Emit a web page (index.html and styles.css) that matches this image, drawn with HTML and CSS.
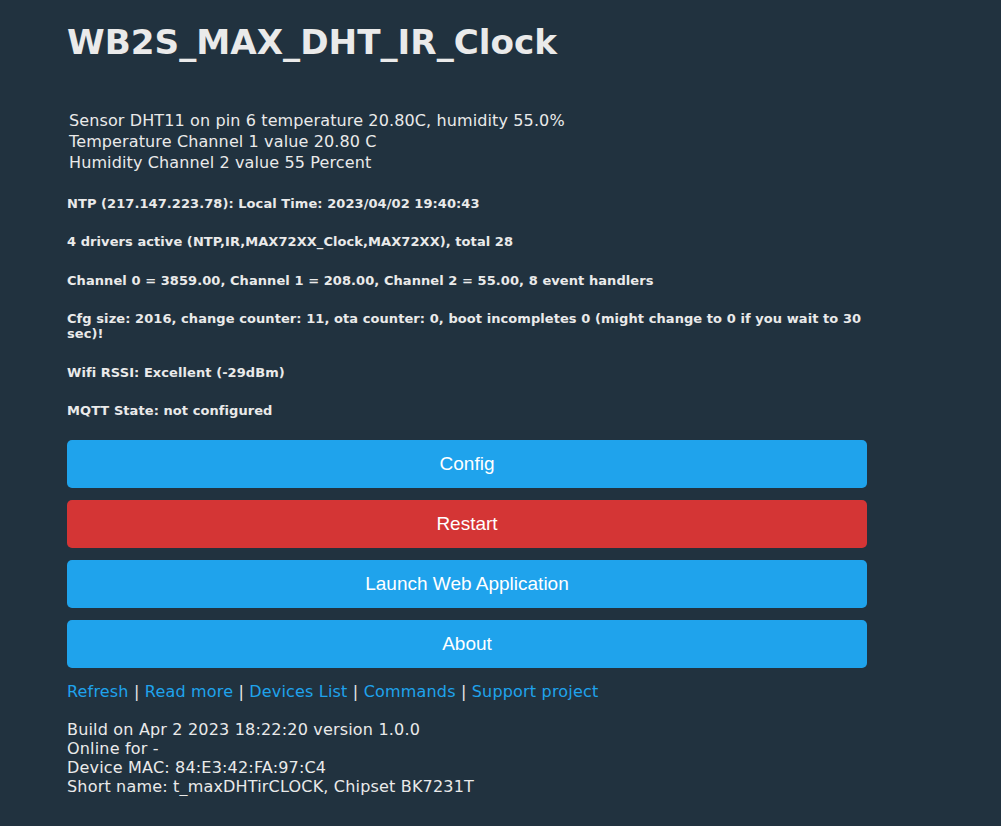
FILE: index.html
```html
<!DOCTYPE html>
<html>
<head>
<meta charset="utf-8">
<title>WB2S_MAX_DHT_IR_Clock</title>
<link rel="stylesheet" href="styles.css">
</head>
<body>
<div class="page">
  <h1 class="title">WB2S_MAX_DHT_IR_Clock</h1>
  <div class="sensors">
    <div>Sensor DHT11 on pin 6 temperature 20.80C, humidity 55.0%</div>
    <div>Temperature Channel 1 value 20.80 C</div>
    <div>Humidity Channel 2 value 55 Percent</div>
  </div>
  <h5 class="info">NTP (217.147.223.78): Local Time: 2023/04/02 19:40:43</h5>
  <h5 class="info">4 drivers active (NTP,IR,MAX72XX_Clock,MAX72XX), total 28</h5>
  <h5 class="info">Channel 0 = 3859.00, Channel 1 = 208.00, Channel 2 = 55.00, 8 event handlers</h5>
  <h5 class="info">Cfg size: 2016, change counter: 11, ota counter: 0, boot incompletes 0 (might change to 0 if you wait to 30 sec)!</h5>
  <h5 class="info">Wifi RSSI: Excellent (-29dBm)</h5>
  <h5 class="info info-last">MQTT State: not configured</h5>
  <div class="buttons">
    <button class="btn">Config</button>
    <button class="btn btn-red">Restart</button>
    <button class="btn">Launch Web Application</button>
    <button class="btn">About</button>
  </div>
  <div class="links">
    <a href="#">Refresh</a> | <a href="#">Read more</a> | <a href="#">Devices List</a> | <a href="#">Commands</a> | <a href="#">Support project</a>
  </div>
  <div class="footer">
    <div>Build on Apr 2 2023 18:22:20 version 1.0.0</div>
    <div>Online for -</div>
    <div>Device MAC: 84:E3:42:FA:97:C4</div>
    <div>Short name: t_maxDHTirCLOCK, Chipset BK7231T</div>
  </div>
</div>
</body>
</html>
```
FILE: styles.css
```css
html, body {
  margin: 0;
  padding: 0;
  background: #21323f;
}
body {
  color: #eaeaea;
  font-family: "DejaVu Sans", Verdana, sans-serif;
  font-size: 16px;
}
.page {
  width: 800px;
  margin-left: 67px;
  padding-top: 1px;
}
.title {
  font-size: 34.2px;
  font-weight: bold;
  margin: 20px 0 0 0;
  line-height: 42px;
}
.sensors {
  margin-top: 47px;
  padding-left: 2px;
  font-size: 16px;
  line-height: 21px;
  letter-spacing: 0.12px;
}
.info {
  font-size: 13px;
  font-weight: bold;
  line-height: 15px;
  margin: 23.5px 0;
  letter-spacing: 0.07px;
}
.info:first-of-type {
  margin-top: 22.5px;
}
.info-last {
  margin-bottom: 21.5px;
}
.buttons {
  display: flex;
  flex-direction: column;
  gap: 12.3px;
}
.btn {
  display: block;
  width: 100%;
  height: 48px;
  border: 0;
  border-radius: 5px;
  background: #1fa3ec;
  color: #fff;
  font-family: "Liberation Sans", Arial, sans-serif;
  font-size: 19px;
  padding: 0;
}
.btn-red {
  background: #d43535;
}
.links {
  margin-top: 13px;
  line-height: 22px;
  letter-spacing: 0.18px;
}
.links a {
  color: #1fa3ec;
  text-decoration: none;
}
.footer {
  margin-top: 18px;
  line-height: 18.7px;
  letter-spacing: 0.18px;
}
```
